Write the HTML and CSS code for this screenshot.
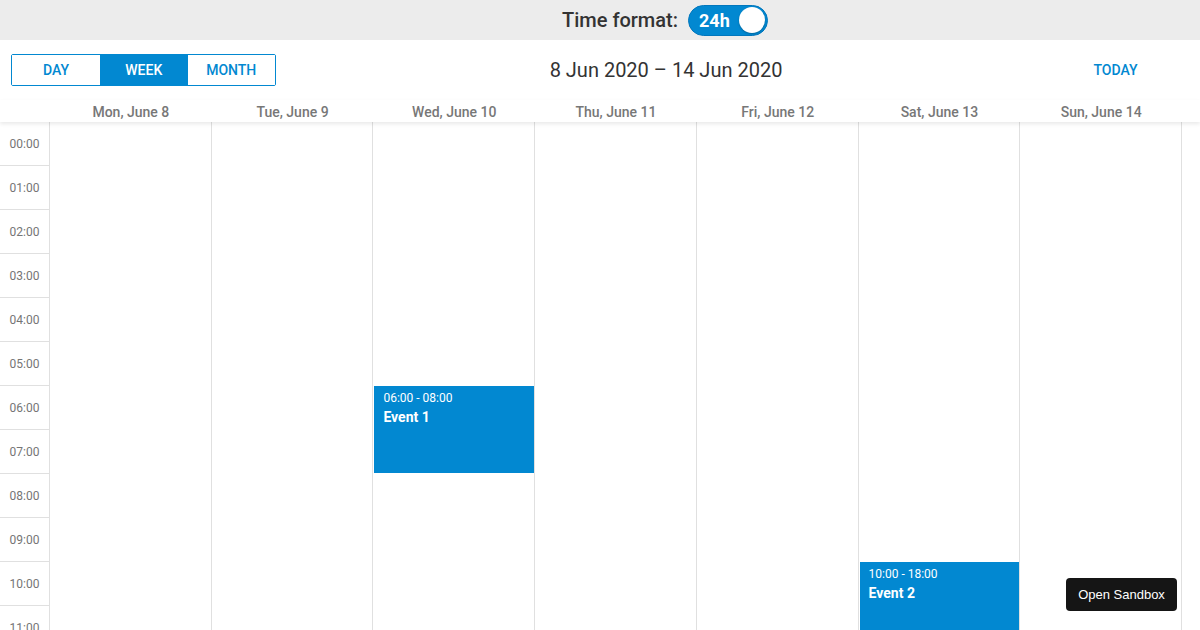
FILE: index.html
```html
<!DOCTYPE html>
<html>
<head>
<meta charset="utf-8">
<link rel="stylesheet" href="styles.css">
</head>
<body>
<div class="topbar">
  <span class="tf-label">Time format:</span>
  <span class="toggle"><span class="toggle-text">24h</span><span class="knob"></span></span>
</div>
<div class="toolbar">
  <div class="seg">
    <button class="seg-btn">Day</button>
    <button class="seg-btn active">Week</button>
    <button class="seg-btn">Month</button>
  </div>
  <div class="title">8 Jun 2020 – 14 Jun 2020</div>
  <button class="today">Today</button>
</div>
<div class="dayhead">
  <div class="corner"></div>
  <div class="dh">Mon, June 8</div>
  <div class="dh">Tue, June 9</div>
  <div class="dh">Wed, June 10</div>
  <div class="dh">Thu, June 11</div>
  <div class="dh">Fri, June 12</div>
  <div class="dh">Sat, June 13</div>
  <div class="dh">Sun, June 14</div>
  <div class="gutter"></div>
</div>
<div class="body">
  <div class="grid">
    <div class="times">
      <div class="hr">00:00</div><div class="hr">01:00</div><div class="hr">02:00</div><div class="hr">03:00</div>
      <div class="hr">04:00</div><div class="hr">05:00</div><div class="hr">06:00</div><div class="hr">07:00</div>
      <div class="hr">08:00</div><div class="hr">09:00</div><div class="hr">10:00</div><div class="hr">11:00</div>
      <div class="hr">12:00</div><div class="hr">13:00</div><div class="hr">14:00</div><div class="hr">15:00</div>
    </div>
    <div class="col"></div>
    <div class="col"></div>
    <div class="col">
      <div class="event" style="top:264px;height:87px"><div class="ev-time">06:00 - 08:00</div><div class="ev-title">Event 1</div></div>
    </div>
    <div class="col"></div>
    <div class="col"></div>
    <div class="col">
      <div class="event" style="top:440px;height:351px"><div class="ev-time">10:00 - 18:00</div><div class="ev-title">Event 2</div></div>
    </div>
    <div class="col"></div>
    <div class="gutter"></div>
  </div>
</div>
<button class="sandbox">Open Sandbox</button>
</body>
</html>
```
FILE: styles.css
```css
* { box-sizing: border-box; }
html, body { margin: 0; padding: 0; }
body {
  width: 1200px;
  height: 630px;
  overflow: hidden;
  font-family: Roboto, "Liberation Sans", sans-serif;
  background: #fff;
  color: #333;
}
.topbar {
  height: 40px;
  background: #ececec;
  display: flex;
  align-items: center;
  justify-content: center;
  gap: 10px;
  padding-left: 130px;
}
.tf-label {
  font-size: 20px;
  color: #333;
  font-weight: 500;
}
.toggle {
  width: 80px;
  height: 31px;
  border-radius: 16px;
  background: #0288d1;
  border: 1px solid #0277bd;
  display: flex;
  align-items: center;
  justify-content: space-between;
  padding: 0 2px 0 10px;
}
.toggle-text {
  color: #fff;
  font-weight: 700;
  font-size: 18px;
}
.knob {
  width: 26px;
  height: 26px;
  border-radius: 50%;
  background: #fff;
  box-shadow: 0 1px 2px rgba(0,0,0,.25);
}
.toolbar {
  height: 60px;
  display: flex;
  align-items: center;
  padding: 0 11px;
}
.seg {
  display: flex;
  width: 265px;
  height: 32px;
  border: 1px solid #0288d1;
  border-radius: 2px;
}
.seg-btn {
  flex: 1;
  border: 0;
  background: #fff;
  color: #0288d1;
  font-family: inherit;
  font-size: 14px;
  font-weight: 500;
  text-transform: uppercase;
  padding: 0;
  cursor: pointer;
}
.seg-btn:first-child { flex: 0 0 88px; }
.seg-btn.active { background: #0288d1; color: #fff; }
.title {
  flex: 1;
  text-align: center;
  font-size: 20px;
  font-weight: 400;
  color: #333;
}
.today {
  width: 119px;
  height: 32px;
  margin-right: 14px;
  border: 0;
  background: transparent;
  color: #0288d1;
  font-family: inherit;
  font-size: 14px;
  font-weight: 500;
  text-transform: uppercase;
}
.dayhead {
  height: 22px;
  display: grid;
  grid-template-columns: 50px repeat(7, 1fr) 18px;
  position: relative;
  z-index: 2;
  box-shadow: 0 2px 4px rgba(0,0,0,.09);
  background: #fff;
}
.dh {
  text-align: center;
  font-size: 14px;
  font-weight: 500;
  color: #777;
  line-height: 20px;
  padding-top: 2px;
}
.body {
  height: 508px;
  overflow: hidden;
}
.grid {
  display: grid;
  grid-template-columns: 50px repeat(7, 1fr) 18px;
}
.times { border-right: 1px solid #e0e0e0; }
.hr {
  height: 44px;
  display: flex;
  align-items: center;
  justify-content: center;
  font-size: 12px;
  color: #757575;
  border-bottom: 1px solid #e0e0e0;
}
.col {
  position: relative;
  border-right: 1px solid #e0e0e0;
  height: 704px;
}
.event {
  position: absolute;
  left: 1px;
  right: 0;
  background: #0288d1;
  color: #fff;
  padding: 5px 9px;
}
.ev-time { font-size: 12px; line-height: 15px; }
.ev-title { font-size: 14px; font-weight: 700; line-height: 22px; }
.sandbox {
  position: fixed;
  right: 23px;
  bottom: 19px;
  width: 111px;
  height: 33px;
  border: 0;
  border-radius: 4px;
  background: #151515;
  color: #fff;
  font-family: "Liberation Sans", Arial, sans-serif;
  font-size: 13px;
  padding: 0;
}
```
